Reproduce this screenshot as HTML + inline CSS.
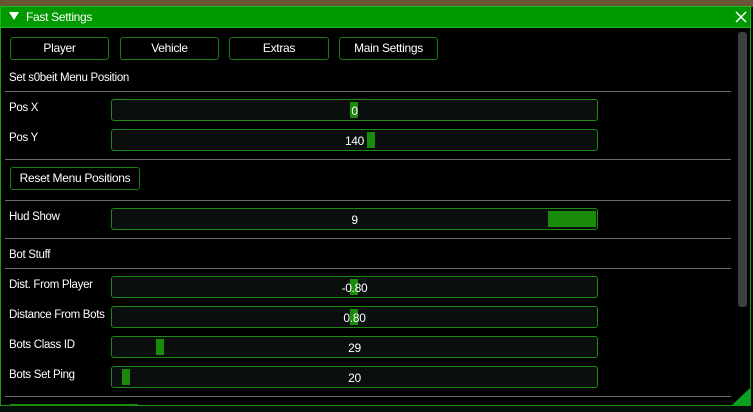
<!DOCTYPE html>
<html><head><meta charset="utf-8"><style>
*{margin:0;padding:0;box-sizing:border-box}
body{width:753px;height:412px;overflow:hidden;background:#06100a;position:relative;font-family:"Liberation Sans",sans-serif;font-size:12px;color:#fff;letter-spacing:-0.3px}
.a{position:absolute}
.top{left:0;top:0;width:753px;height:7px;background:#6a5635}
.win{left:0;top:6px;width:751px;height:400px;background:#000;border:1px solid #1a9a10}
.title{left:0;top:6px;width:751px;height:22px;background:#009a00;border:1px solid #1cb81c}
.btn{height:23px;border:1px solid #1e7a14;border-radius:3px;background:#000;text-align:center;line-height:21px}
.lbl{left:9px;font-size:11.5px;margin-top:2px}
.sl{left:111px;width:487px;height:22px;background:#0a0e0c;border:1px solid #1e8a14;border-radius:3px;text-align:center;line-height:23px}
.g{position:absolute;top:2px;height:16px;width:8px;background:#1a8a0a}
.sep{left:5px;width:726px;height:1px;background:#6a6a6a}
.sl span{position:relative}
</style></head><body>
<div class="a top"></div>
<div class="a win"></div>
<div class="a title"></div>
<svg class="a" style="left:9px;top:12px" width="10" height="8"><path d="M0 0H10L5 8Z" fill="#fff"/></svg>
<div class="a" style="left:26px;top:10px;line-height:15px">Fast Settings</div>
<svg class="a" style="left:735px;top:11px" width="12" height="12"><path d="M1 1L11 11M11 1L1 11" stroke="#fff" stroke-width="1.5"/></svg>
<div class="a btn" style="left:10px;top:37px;width:99px">Player</div>
<div class="a btn" style="left:120px;top:37px;width:99px">Vehicle</div>
<div class="a btn" style="left:229px;top:37px;width:100px">Extras</div>
<div class="a btn" style="left:339px;top:37px;width:99px">Main Settings</div>
<div class="a lbl" style="top:70px">Set s0beit Menu Position</div>
<div class="a sep" style="top:91px"></div>
<div class="a lbl" style="top:100px">Pos X</div>
<div class="a sl" style="top:99px"><div class="g" style="left:238px"></div><span>0</span></div>
<div class="a lbl" style="top:130px">Pos Y</div>
<div class="a sl" style="top:129px"><div class="g" style="left:255px"></div><span>140</span></div>
<div class="a sep" style="top:159px"></div>
<div class="a btn" style="left:10px;top:167px;width:130px">Reset Menu Positions</div>
<div class="a sep" style="top:200px"></div>
<div class="a lbl" style="top:209px">Hud Show</div>
<div class="a sl" style="top:208px"><div class="g" style="left:436px;width:48px"></div><span>9</span></div>
<div class="a sep" style="top:238px"></div>
<div class="a lbl" style="top:247px">Bot Stuff</div>
<div class="a sep" style="top:268px"></div>
<div class="a lbl" style="top:277px">Dist. From Player</div>
<div class="a sl" style="top:276px"><div class="g" style="left:238px"></div><span>-0.80</span></div>
<div class="a lbl" style="top:307px">Distance From Bots</div>
<div class="a sl" style="top:306px"><div class="g" style="left:238px"></div><span>0.80</span></div>
<div class="a lbl" style="top:337px">Bots Class ID</div>
<div class="a sl" style="top:336px"><div class="g" style="left:44px"></div><span>29</span></div>
<div class="a lbl" style="top:367px">Bots Set Ping</div>
<div class="a sl" style="top:366px"><div class="g" style="left:10px"></div><span>20</span></div>
<div class="a sep" style="top:396px"></div>
<div class="a" style="left:738px;top:32px;width:9px;height:275px;background:#3e3e3e;border-radius:3px"></div>
<svg class="a" style="left:732px;top:388px" width="18" height="17"><path d="M18 0V17H0Z" fill="#0aa020"/></svg>
<div class="a" style="left:10px;top:404px;width:128px;height:2px;background:#1a8a0a"></div>
</body></html>
